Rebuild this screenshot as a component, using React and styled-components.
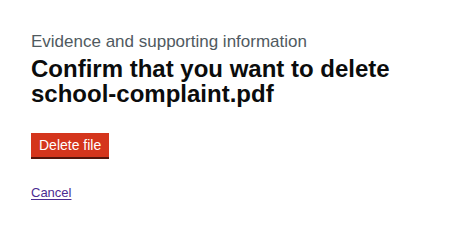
import React from "react";
import styled, { createGlobalStyle } from "styled-components";

const GlobalStyle = createGlobalStyle`
  body {
    margin: 0;
    background: #ffffff;
    font-family: "Liberation Sans", Arial, sans-serif;
    -webkit-font-smoothing: antialiased;
  }
`;

const Page = styled.main`
  padding: 32px 31px 0;
`;

const Caption = styled.span`
  display: block;
  margin-bottom: 4px;
  font-size: 17px;
  line-height: 20px;
  color: #505a5f;
`;

const Heading = styled.h1`
  margin: 0 0 27px;
  font-size: 24px;
  line-height: 25px;
  font-weight: 700;
  color: #0b0c0c;
`;

const Button = styled.button`
  display: block;
  margin: 0 0 26px;
  padding: 4px 8px;
  border: 0;
  border-radius: 0;
  font-family: inherit;
  font-size: 14px;
  line-height: 16px;
  color: #ffffff;
  background: ${props => (props.warning ? "#d4351c" : "#00703c")};
  box-shadow: 0 2px 0 ${props => (props.warning ? "#55150b" : "#002d18")};
  cursor: pointer;
`;

const Link = styled.a`
  display: inline-block;
  font-size: 13px;
  line-height: 16px;
  color: #4c2c92;
  text-decoration: underline;
  text-decoration-thickness: 1px;
  text-underline-offset: 2px;
`;

export default function App() {
  return (
    <>
      <GlobalStyle />
      <Page>
        <Caption>Evidence and supporting information</Caption>
        <Heading>
          Confirm that you want to delete
          <br />
          school-complaint.pdf
        </Heading>
        <Button warning>Delete file</Button>
        <Link href="#">Cancel</Link>
      </Page>
    </>
  );
}
